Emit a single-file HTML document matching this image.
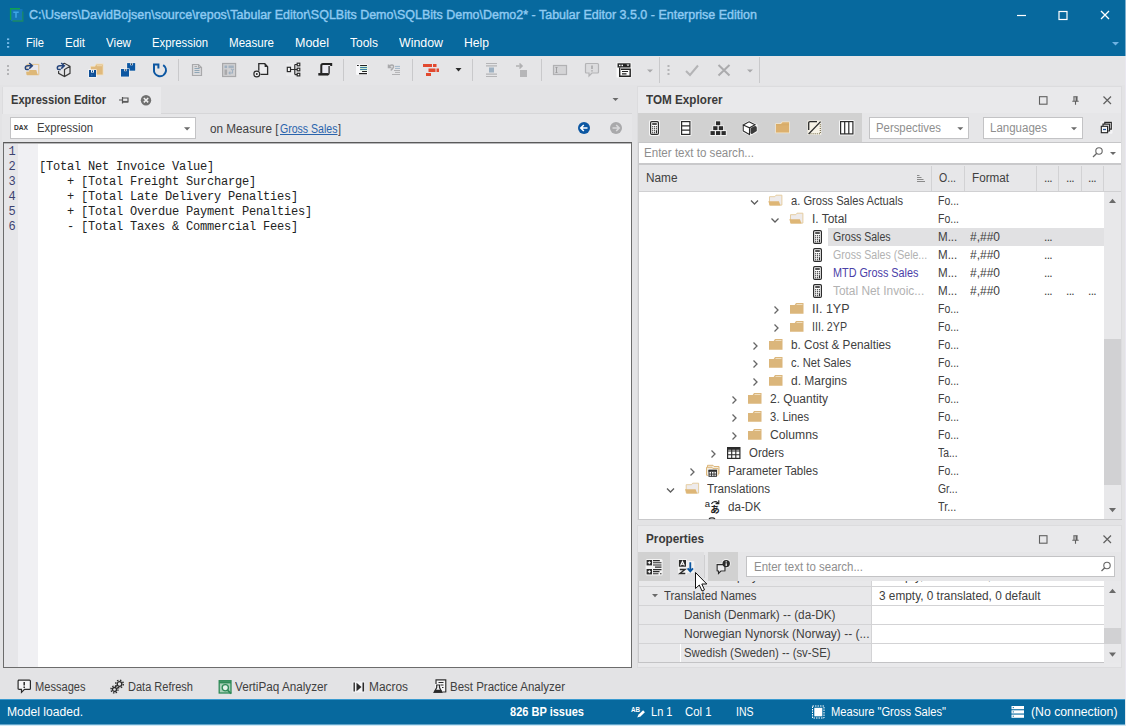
<!DOCTYPE html>
<html>
<head>
<meta charset="utf-8">
<title>Tabular Editor</title>
<style>
html,body{margin:0;padding:0;}
body{width:1126px;height:726px;overflow:hidden;position:relative;background:#e3e3e5;font-family:"Liberation Sans",sans-serif;font-size:12px;color:#3b3b3b;}
.abs{position:absolute;}
.t{position:absolute;white-space:nowrap;line-height:16px;height:16px;transform-origin:0 50%;font-size:12.5px;}
svg{position:absolute;overflow:visible;}
#titlebar{left:0;top:0;width:1126px;height:56px;background:#07699e;}
.ttl{font-size:12.5px;color:#8fcaf2;-webkit-text-stroke:0.4px #8fcaf2;}
.menu{color:#fff;}
#toolbar{left:0;top:56px;width:1126px;height:29px;background:#e5e5e7;}
.ptitle{font-weight:bold;font-size:12.5px;color:#3a3a3a;}
.n{color:#404040;}
.g{color:#8e8e8e;}
.dg{color:#b2b2b2;}
.pu{color:#4a40a8;}
.dax{font-size:8px;font-weight:bold;color:#333;}
.lnk{color:#2a64ad;text-decoration:underline;}
.st{color:#fff;}
.b{font-weight:bold;}
#editor{left:3px;top:142px;width:627px;height:524px;background:#fff;border:1px solid #6c6c6c;border-top:1px solid #5a5a5a;box-shadow:inset 0 1px 0 #b8b8ba;}
#gutter{left:4px;top:144px;width:34px;height:523px;background:linear-gradient(90deg,#e6e6e9 0,#e6e6e9 14px,#f0f0f3 14px);}
.fx{transform:none;}
.ln{left:8.500px;font-family:"Liberation Mono",monospace;font-size:12px;color:#3d4270;}
.code{font-family:"Liberation Mono",monospace;font-size:12px;letter-spacing:-0.2px;color:#222;white-space:pre;}
#status{left:0;top:699px;width:1126px;height:25px;background:#07699e;}

</style>
</head>
<body>
<div id="titlebar" class="abs"></div>
<svg style="left:0;top:0" width="1126" height="56" viewBox="0 0 1126 56">
 <rect x="11" y="9" width="11.5" height="12" fill="#1477b6"/>
 <path d="M12.5 21 H22.8 V11.5" fill="none" stroke="#1b8a66" stroke-width="1.3"/>
 <path d="M10.6 20 V8.7 H20" fill="none" stroke="#10a04e" stroke-width="1.4"/>
 <path d="M13.3 12.3 H18.7 M16 12.3 V17.7" stroke="#3fa6e6" stroke-width="1.5" fill="none"/>
 <rect x="7" y="38.4" width="2.2" height="1.7" fill="#7abdea"/><rect x="7" y="42.2" width="2.2" height="1.7" fill="#7abdea"/><rect x="7" y="46" width="2.2" height="1.7" fill="#7abdea"/>
 <path d="M1017 15.5 H1026" stroke="#fff" stroke-width="1.2"/>
 <rect x="1059" y="11.5" width="8" height="8" fill="none" stroke="#fff" stroke-width="1.2"/>
 <path d="M1101 11 L1109 19 M1109 11 L1101 19" stroke="#fff" stroke-width="1.3"/>
 <path d="M1112 42 H1119 L1115.5 45.5 Z" fill="#6fb2e2"/>
 <rect x="1125" y="0" width="1" height="56" fill="#7fb0d0"/>
</svg>

<div id="toolbar" class="abs"></div>
<svg style="left:0;top:56px" width="1126" height="29" viewBox="0 56 1126 29">
 <g fill="#b4b4b6"><rect x="7" y="65" width="2" height="2"/><rect x="7" y="69" width="2" height="2"/><rect x="7" y="73" width="2" height="2"/>
 <rect x="667.5" y="65" width="2" height="2"/><rect x="667.5" y="69" width="2" height="2"/><rect x="667.5" y="73" width="2" height="2"/></g>
 <g fill="#c9c9cb"><rect x="178" y="59" width="1" height="22"/><rect x="343" y="59" width="1" height="22"/><rect x="412" y="59" width="1" height="22"/><rect x="472" y="59" width="1" height="22"/><rect x="541" y="59" width="1" height="22"/><rect x="659" y="57" width="1" height="26"/><rect x="759" y="57" width="1" height="26"/></g>
 <!-- 1 open folder -->
 <g>
  <path d="M27 64.4 H38.8 V74.8 H27 Z" fill="#e9e8ee" stroke="#e7c48c" stroke-width="1"/>
  <path d="M26.2 71.8 L29.5 70 H36.3 L37.8 74.9 H26.8 Z" fill="#deb878"/>
  <path d="M25.3 70.3 H29.2" stroke="#e5e5e7" stroke-width="2.6"/>
  <path d="M28.8 69.6 H26.7 Q25.3 69.6 25.3 68 Q25.3 65.8 28 65.8 H31.6 M29.2 63 L32.3 65.8 L29.2 68.6" fill="none" stroke="#24437a" stroke-width="1.5"/>
 </g>
 <!-- 2 cube -->
 <g fill="none" stroke="#3a3a3a" stroke-width="1.2">
  <path d="M63 63.8 L64.5 63.3 L70 66.3 V73.3 L64.5 76.5 L58.6 73.3 V71 M64.5 76.5 V69.5 L70 66.3"/>
  <path d="M60.8 69.6 H58.7 Q57.3 69.6 57.3 68 Q57.3 65.8 60 65.8 H63.6 M61.2 63 L64.3 65.8 L61.2 68.6" stroke="#24437a" stroke-width="1.5"/>
 </g>
 <!-- 3 folder + disk -->
 <g>
  <path d="M90.3 66 H94.5 L96 63.6 H103.5 V75.2 H90.3 Z" fill="#f1e0bf"/>
  <path d="M91 66.7 H95 L96.5 64.4 H102.7 V74.5 H91 Z" fill="#e0b97c"/>
  <path d="M96.8 65.7 H102" stroke="#f1e0bf" stroke-width="0.8"/>
  <rect x="88.3" y="69.4" width="8.3" height="8.2" fill="#f8f8fa"/>
  <rect x="89" y="70" width="7" height="7" fill="#0f4f96"/><rect x="91" y="70" width="3" height="2.6" fill="#eef3f8"/><rect x="92" y="70.5" width="1" height="1.6" fill="#0f4f96"/>
  <rect x="91.3" y="74.3" width="1" height="1.5" fill="#3a77b8"/>
 </g>
 <!-- 4 two disks -->
 <g>
  <rect x="126.5" y="62.6" width="9.2" height="8.6" fill="#f4f4f6"/>
  <rect x="127.1" y="63.1" width="8.1" height="7.6" fill="#0c57a2"/><rect x="130.3" y="63.1" width="2.4" height="2.2" fill="#f4f4f6"/><rect x="131" y="63.4" width="1" height="1.5" fill="#1d2f45"/>
  <rect x="120.4" y="68.4" width="9.2" height="8.8" fill="#f4f4f6"/>
  <rect x="121" y="69" width="8" height="7.6" fill="#0c57a2"/><rect x="124.2" y="69" width="2.4" height="2.2" fill="#f4f4f6"/><rect x="124.9" y="69.3" width="1" height="1.5" fill="#1d2f45"/>
 </g>
 <!-- 5 refresh -->
 <g fill="none" stroke="#0c57a2" stroke-width="2">
  <path d="M163.2 65.2 A6 6 0 1 1 154 69.5 L154 64.4 H158.4 V68.5" stroke-linejoin="miter"/>
 </g>
 <!-- 6 doc grey -->
 <g fill="none">
  <path d="M192.5 64.5 H198.5 L201.5 67.5 V75.5 H192.5 Z" fill="#dadadc" stroke="#a9a9ab" stroke-width="1.2"/>
  <path d="M198.5 64.5 V67.5 H201.5" stroke="#a9a9ab" stroke-width="1"/>
  <path d="M194.5 68.5 H199.5 M194.5 70.5 H199.5 M194.5 72.5 H199.5" stroke="#8fa6b6" stroke-width="1"/>
  <path d="M194.5 66.5 H197" stroke="#a9a9ab" stroke-width="1"/>
 </g>
 <!-- 7 grid grey -->
 <g>
  <rect x="222.6" y="63.5" width="13" height="13" fill="#d0d0d2" stroke="#a8a8aa" stroke-width="1.2"/>
  <rect x="224.5" y="65.5" width="2.6" height="2.6" fill="#9fb0c0"/><rect x="228.5" y="65.5" width="5.3" height="2.6" fill="#a4b2c0"/>
  <rect x="224.5" y="69.5" width="2.6" height="5.3" fill="#a9a9ab"/><path d="M229 73 H232.5 V70 M231 68.8 L232.5 70.3 L234 68.8 M230.3 71.5 L229 73 L230.3 74.5" fill="none" stroke="#9fb0c0" stroke-width="1.1"/>
 </g>
 <!-- 8 doc with circle -->
 <g fill="none" stroke="#2b2b2b" stroke-width="1.3">
  <path d="M258.8 70.8 V63.7 H264.8 L267.6 66.8 V74.4 H260.5" fill="#ececee"/>
  <path d="M264.6 63.7 L267.7 67 H264.6 Z" fill="#2b2b2b" stroke="none"/>
  <circle cx="256.8" cy="74" r="2.9" fill="#f2f2f4" stroke-width="1.2"/><circle cx="256.8" cy="74" r="1" fill="#2b2b2b" stroke="none"/>
 </g>
 <!-- 9 tree -->
 <g fill="none" stroke="#2b2b2b" stroke-width="1.2">
  <rect x="286.2" y="63" width="15" height="13.2" fill="#ebebed" stroke="none"/>
  <rect x="287.3" y="67.3" width="3.2" height="4.3" fill="#fafafa"/>
  <path d="M290.5 69.5 H294.8 M294.8 64.5 V74.6 M294.8 64.5 H297 M294.8 69.5 H297 M294.8 74.6 H297"/>
  <rect x="297.2" y="63.2" width="2.6" height="2.6" fill="#fafafa"/><rect x="297.2" y="68.2" width="2.6" height="2.6" fill="#fafafa"/><rect x="297.2" y="73.3" width="2.6" height="2.6" fill="#fafafa"/>
 </g>
 <!-- 10 scroll -->
 <g fill="none" stroke="#222">
  <path d="M322 64.5 H329.5 V74 H322 Z" fill="#e9e9f1" stroke="none"/>
  <path d="M321.3 73.6 V65.5 Q321.3 63.9 323 63.9 H331.2 V66" stroke-width="2"/>
  <path d="M329.1 66 V73 Q329.1 74.6 327.5 74.6" stroke-width="1.3"/>
  <path d="M318.3 74.3 H328.3" stroke-width="2.5"/>
 </g>
 <g fill="#c9c9cb"><rect x="343" y="59" width="1" height="22"/></g>
 <!-- 11 indent -->
 <g>
  <rect x="356" y="64" width="12" height="11" rx="1.5" fill="#f8f8fa"/>
  <rect x="360" y="66.3" width="7.5" height="4.2" fill="#cfeccd"/>
  <path d="M357 65.5 H358.8 M360.1 65.5 H367" stroke="#222" stroke-width="1.1"/>
  <path d="M360.1 67.5 H367 M360.1 69.5 H367" stroke="#3a7ea6" stroke-width="1.1"/>
  <path d="M362.1 71.5 H367 M359 73.6 H367" stroke="#222" stroke-width="1.1"/>
 </g>
 <!-- 12 undo indent grey -->
 <g fill="none">
  <path d="M395 66.4 H400 M395 68.4 H400" stroke="#9fb5c8" stroke-width="1"/>
  <path d="M394 70.5 H400 M395 72.4 H400 M392 74.5 H400" stroke="#b1b1b3" stroke-width="1"/>
  <path d="M388.5 64.5 V67.5 H391.5 M389 67 C390.5 64 394 64.5 393.5 67 C393.3 68.5 391.5 69 391 70.5" stroke="#a9a9ab" stroke-width="1.5"/>
 </g>
 <!-- 13 gantt red -->
 <g transform="translate(423,62)" fill="#e2492f">
  <rect x="0" y="2" width="9" height="3"/><rect x="10" y="2" width="3.5" height="3"/>
  <rect x="5.5" y="6.5" width="7" height="3.5"/><rect x="13.5" y="6.5" width="2.5" height="3.5"/>
  <rect x="3" y="11" width="5" height="3"/>
 </g>
 <path d="M455.5 68 H461.5 L458.5 71.5 Z" fill="#2b2b2b"/>
 <!-- 14 align grey -->
 <g transform="translate(483,62)" fill="none" stroke="#b4b4b6" stroke-width="1.2">
  <path d="M3 1.5 H14 M3 3.8 H14 M3 12.2 H14 M3 14.5 H14"/>
  <rect x="6" y="5.5" width="5" height="5" fill="#9eb1c2" stroke="none"/>
 </g>
 <!-- 15 arrow+box grey -->
 <g transform="translate(515,62)" fill="none" stroke="#b1b1b3" stroke-width="1.6">
  <path d="M1 4 H7 M4.5 1.5 L7 4 L4.5 6.5"/>
  <rect x="5" y="8" width="7" height="7" fill="#b6b6b8" stroke="none"/>
 </g>
 <!-- 16 rect cursor grey -->
 <g transform="translate(552,62)" fill="none" stroke="#b1b1b3" stroke-width="1.2">
  <rect x="1.5" y="3.5" width="13" height="9" fill="#d4d4d6"/>
  <path d="M3.5 5.5 H5.5 M4.5 5.5 V10.5 M3.5 10.5 H5.5" stroke-width="0.9" stroke="#9a9a9c"/>
 </g>
 <!-- 17 bubble grey -->
 <g transform="translate(584,62)" fill="none" stroke="#b4b4b6" stroke-width="1.2">
  <path d="M2.5 1.5 H13.5 Q14.5 1.5 14.5 2.5 V10 Q14.5 11 13.5 11 H8 L5 14 V11 H2.5 Q1.5 11 1.5 10 V2.5 Q1.5 1.5 2.5 1.5 Z" fill="#dcdcde"/>
  <path d="M8 3.5 V7 M8 8.2 V9.5" stroke="#a4a4a6" stroke-width="1.5"/>
 </g>
 <!-- 18 form black -->
 <g transform="translate(616,62)">
  <rect x="0.5" y="0.5" width="15" height="15" fill="#fafafa"/>
  <rect x="1.5" y="1.3" width="13" height="4.2" fill="#222"/>
  <rect x="3" y="2.7" width="1.5" height="1.5" fill="#fff"/><rect x="5.5" y="2.7" width="1.5" height="1.5" fill="#fff"/><path d="M10.5 2.5 H13.5 L12 4.3Z" fill="#fff"/>
  <path d="M3.7 5.5 V14.3 H14.2 V7.2 H5" fill="none" stroke="#222" stroke-width="1.4"/>
  <path d="M6 9.5 H12 M6 11.8 H10.5" stroke="#222" stroke-width="1.2"/>
 </g>
 <path d="M647 69.5 H653 L650 72.5 Z" fill="#a9a9ab"/>
 <path d="M686 71 L690 75 L698 65.5" fill="none" stroke="#b4b4b6" stroke-width="2"/>
 <path d="M718.5 65 L729.5 75.5 M729.5 65 L718.5 75.5" fill="none" stroke="#ababad" stroke-width="2"/>
 <path d="M747 69.5 H753 L750 72.5 Z" fill="#a9a9ab"/>
</svg>

<div class="abs" style="left:0;top:85px;width:1126px;height:28px;background:#e3e3e5"></div>
<div class="abs" style="left:2px;top:113px;width:630px;height:30px;background:#e6e6e8;border-top:1px solid #d6d6d8"></div>
<div class="abs" style="left:2px;top:87px;width:159px;height:27px;background:#eaeaec;border-left:1px solid #dcdcde;box-sizing:border-box"></div>
<div class="abs" style="left:10px;top:117px;width:186px;height:22px;background:#fff;border:1px solid #c3c3c5;box-sizing:border-box"></div>
<svg style="left:0;top:85px" width="640" height="60" viewBox="0 85 640 60">
 <!-- pin -->
 <path d="M119 100 H122.5 M122.5 97 V103.5 M123 98 H128 V102 H123" fill="none" stroke="#555" stroke-width="1.2"/>
 <path d="M123 101.7 H128" stroke="#5a5a5a" stroke-width="1.6"/>
 <!-- close -->
 <circle cx="146" cy="100.2" r="5.2" fill="#707070"/>
 <path d="M143.8 98 L148.2 102.4 M148.2 98 L143.8 102.4" stroke="#f0f0f0" stroke-width="1.5"/>
 <!-- combo arrow -->
 <path d="M184 127.3 H190.2 L187.1 130.4 Z" fill="#6a6a6a"/>
 <!-- tabs dropdown -->
 <path d="M612.5 98 H618.5 L615.5 101 Z" fill="#6a6a6a"/>
 <!-- nav arrows -->
 <circle cx="584" cy="128" r="6" fill="#0c57a2"/>
 <path d="M587.5 128 H581 M583.8 125 L580.8 128 L583.8 131" fill="none" stroke="#fff" stroke-width="1.6"/>
 <circle cx="616" cy="128" r="6" fill="#a9a9ab"/>
 <path d="M612.5 128 H619 M616.2 125 L619.2 128 L616.2 131" fill="none" stroke="#d9d9db" stroke-width="1.6"/>
</svg>
<div id="editor" class="abs"></div>
<div id="gutter" class="abs"></div>
<div class="t fx ln" style="top:144px">1</div>
<div class="t fx ln" style="top:159px">2</div>
<div class="t fx ln" style="top:174px">3</div>
<div class="t fx ln" style="top:189px">4</div>
<div class="t fx ln" style="top:204px">5</div>
<div class="t fx ln" style="top:219px">6</div>
<div class="t fx code" style="left:39px;top:159px">[Total Net Invoice Value]</div>
<div class="t fx code" style="left:39px;top:174px">    + [Total Freight Surcharge]</div>
<div class="t fx code" style="left:39px;top:189px">    + [Total Late Delivery Penalties]</div>
<div class="t fx code" style="left:39px;top:204px">    + [Total Overdue Payment Penalties]</div>
<div class="t fx code" style="left:39px;top:219px">    - [Total Taxes &amp; Commercial Fees]</div>

<div class="abs" style="left:637px;top:86px;width:485px;height:434px;background:#e9e9eb;border:1px solid #dcdcde;box-sizing:border-box"></div>
<div class="abs" style="left:638px;top:113px;width:483px;height:29px;background:#e6e6e8"></div>
<div class="abs" style="left:638px;top:113px;width:224px;height:29px;background:#d1d1d1"></div>
<div class="abs" style="left:869px;top:117px;width:100px;height:22px;background:#fff;border:1px solid #c3c3c5;box-sizing:border-box"></div>
<div class="abs" style="left:983px;top:117px;width:100px;height:22px;background:#fff;border:1px solid #c3c3c5;box-sizing:border-box"></div>
<div class="abs" style="left:639px;top:143px;width:482px;height:20px;background:#fff;border-bottom:2px solid #c9c9cb"></div>
<div class="abs" style="left:638px;top:142px;width:483px;height:1px;background:#c6c6c8"></div>
<div class="abs" style="left:639px;top:165px;width:482px;height:26px;background:#e7e7e9;border-bottom:1px solid #d0d0d2"></div>
<div class="abs" style="left:931px;top:166px;width:1px;height:25px;background:#d2d2d4"></div>
<div class="abs" style="left:964px;top:166px;width:1px;height:25px;background:#d2d2d4"></div>
<div class="abs" style="left:1036px;top:166px;width:1px;height:25px;background:#d2d2d4"></div>
<div class="abs" style="left:1058px;top:166px;width:1px;height:25px;background:#d2d2d4"></div>
<div class="abs" style="left:1081px;top:166px;width:1px;height:25px;background:#d2d2d4"></div>
<div class="abs" style="left:1103px;top:166px;width:1px;height:25px;background:#d2d2d4"></div>
<div class="abs" style="left:639px;top:192px;width:465px;height:327px;background:#fff"></div>
<div class="abs" style="left:638px;top:143px;width:1px;height:376px;background:#c9c9cb"></div>
<div class="abs" style="left:638px;top:519px;width:484px;height:1px;background:#c9c9cb"></div>
<div class="abs" style="left:828px;top:228px;width:276px;height:18px;background:#e1e1e3"></div>
<div class="abs" style="left:1104px;top:192px;width:17px;height:327px;background:#e8e8ea"></div>
<div class="abs" style="left:1104px;top:339px;width:17px;height:146px;background:#d1d1d3"></div>
<svg style="left:0;top:0" width="1126" height="726" viewBox="0 0 1126 726">
<g transform="translate(650,121)"><rect x="-1" y="-1" width="11" height="16" rx="2" fill="#f6f6f6"/><rect x="0.6" y="0.6" width="7.8" height="12.8" rx="1.2" fill="#fff" stroke="#2b2b2b" stroke-width="1.2"/><rect x="2.2" y="2.2" width="4.6" height="1.6" fill="#2b2b2b"/><rect x="2.1" y="5.2" width="1.1" height="1.1" fill="#2b2b2b"/><rect x="4" y="5.2" width="1.1" height="1.1" fill="#2b2b2b"/><rect x="5.9" y="5.2" width="1.1" height="1.1" fill="#2b2b2b"/><rect x="2.1" y="7.2" width="1.1" height="1.1" fill="#2b2b2b"/><rect x="4" y="7.2" width="1.1" height="1.1" fill="#2b2b2b"/><rect x="5.9" y="7.2" width="1.1" height="1.1" fill="#2b2b2b"/><rect x="2.1" y="9.2" width="1.1" height="1.1" fill="#2b2b2b"/><rect x="4" y="9.2" width="1.1" height="1.1" fill="#2b2b2b"/><rect x="5.9" y="9.2" width="1.1" height="3.1" fill="#2b2b2b"/><rect x="2.1" y="11.2" width="1.1" height="1.1" fill="#2b2b2b"/><rect x="4" y="11.2" width="1.1" height="1.1" fill="#2b2b2b"/></g>
<g transform="translate(681,121)"><rect x="-1" y="-1" width="11.5" height="16" rx="1.5" fill="#f6f6f6"/><rect x="0.6" y="0.6" width="8.3" height="12.8" fill="#fff" stroke="#2b2b2b" stroke-width="1.2"/><path d="M0.6 4.8 H9 M0.6 9.2 H9" stroke="#2b2b2b" stroke-width="1.2"/></g>
<g transform="translate(710.5,121)" fill="#2b2b2b"><rect x="4.8" y="-0.4" width="5.8" height="5.4" fill="#f8f8f8"/><rect x="2" y="4.5" width="5.8" height="5.4" fill="#f8f8f8"/><rect x="7.6" y="4.5" width="5.8" height="5.4" fill="#f8f8f8"/><rect x="-0.7" y="9.4" width="5.8" height="5.4" fill="#f8f8f8"/><rect x="4.8" y="9.4" width="5.8" height="5.4" fill="#f8f8f8"/><rect x="10.3" y="9.4" width="5.8" height="5.4" fill="#f8f8f8"/><rect x="5.5" y="0.3" width="4.3" height="3.9"/><rect x="2.7" y="5.2" width="4.3" height="3.9"/><rect x="8.3" y="5.2" width="4.3" height="3.9"/><rect x="0" y="10.1" width="4.3" height="3.9"/><rect x="5.5" y="10.1" width="4.3" height="3.9"/><rect x="11" y="10.1" width="4.3" height="3.9"/></g>
<g transform="translate(742,121)"><path d="M7 -0.5 L15.5 3.5 V11 L8 15 L0 11 V3.5 Z" fill="#f4f4f4"/><path d="M7 0.8 L13 3.8 L7.5 6.8 L1.2 4 Z M1.2 4 V10 L7.5 13.5 V6.8" fill="#fff" stroke="#2b2b2b" stroke-width="1.1"/><path d="M8.5 7.3 L12 5.3 Q14.5 4.3 14.8 6.5 V10 L10.5 12.8 Q8.5 13.5 8.5 11.5 Z" fill="#3a3a3a"/></g>
<g transform="translate(775,121)"><path d="M0.3 2.3 H5.5 L7 0.5 H14.8 V12.3 H0.3 Z" fill="#f3e6cc"/><path d="M1 3 H6 L7.5 1.3 H14 V11.5 H1 Z" fill="#dcb06e"/><path d="M1 3.8 H14" stroke="#d2a660" stroke-width="0.6"/></g>
<g transform="translate(808,121)"><rect x="-0.5" y="-0.5" width="13.8" height="14.3" fill="#f6f2e6"/><path d="M0.7 9 V2 Q0.7 0.7 2 0.7 H9" fill="none" stroke="#2b2b2b" stroke-width="1.3"/><path d="M0.6 13 L12.6 0.6" stroke="#2b2b2b" stroke-width="1.3"/><path d="M2.5 12.8 H12.3 V3" fill="none" stroke="#6b6240" stroke-width="1.1" stroke-dasharray="1 1.1"/></g>
<g transform="translate(840,121)"><rect x="-1" y="-1" width="15.5" height="15.5" rx="1.5" fill="#f6f6f6"/><rect x="0.6" y="0.6" width="12.3" height="12.3" fill="#fff" stroke="#2b2b2b" stroke-width="1.2"/><path d="M4.7 0.6 V13 M8.8 0.6 V13" stroke="#2b2b2b" stroke-width="1.2"/></g>
<rect x="1039.5" y="96.7" width="7.5" height="7.5" fill="none" stroke="#606060" stroke-width="1.1"/><path d="M1073.3 96.7 H1077.7 M1074 96.7 V101.2 M1077 96.7 V101.2 M1072.3 101.2 H1078.7 M1075.5 101.2 V104.7" fill="none" stroke="#606060" stroke-width="1.1"/><path d="M1075.6 96.7 H1077 V101.2 H1075.6 Z" fill="#606060"/><path d="M1103.5 96.5 L1111 104.0 M1111 96.5 L1103.5 104.0" stroke="#606060" stroke-width="1.2"/>
<path d="M957.3 127.3 H963.3 L960.3 130.3 Z" fill="#6a6a6a"/><path d="M1071 127.3 H1077 L1074 130.3 Z" fill="#6a6a6a"/>
<g fill="#fafafa" stroke="#2b2b2b" stroke-width="1.2"><rect x="1100.3" y="121" width="12.2" height="12.8" rx="1" fill="#f4f4f6" stroke="none"/><path d="M1104.8 124 V122.3 H1111.3 V129.2 H1110"/><path d="M1103 126.2 V124.2 H1109.5 V131 H1108"/><rect x="1101.3" y="126.3" width="6.3" height="6.4"/><path d="M1103 129.5 H1106" stroke="#1c4f96" stroke-width="1.3"/></g>
<circle cx="1099" cy="151" r="3.2" fill="none" stroke="#666" stroke-width="1.1"/><path d="M1096.8 153.3 L1093 157" stroke="#666" stroke-width="1.3"/><path d="M1110 152 H1116 L1113 155 Z" fill="#6a6a6a"/>
<path d="M917 175.5 H919.5 M917 177.5 H921.5 M917 179.5 H923.5 M917 181.5 H925" stroke="#8a8a8a" stroke-width="1"/>
<path d="M1109 203 H1116 L1112.5 198.7 Z" fill="#6a6a6a"/><path d="M1109 508 H1116 L1112.5 512.3 Z" fill="#6a6a6a"/>
<path d="M751.0 200.5 L754.5 204 L758.0 200.5" fill="none" stroke="#5e5e5e" stroke-width="1.3"/>
<g transform="translate(768.3,194.7)"><path d="M1.2 2 H6.5 L7.7 0.5 H13.6 V10.4 H1.2 Z" fill="#eeebeb" stroke="#e3c899" stroke-width="0.9"/><path d="M0 6.5 H10.6 L12.2 10.9 H1.6 Z" fill="#deb676"/></g>
<path d="M771.5 218.5 L775 222 L778.5 218.5" fill="none" stroke="#5e5e5e" stroke-width="1.3"/>
<g transform="translate(789.3,212.7)"><path d="M1.2 2 H6.5 L7.7 0.5 H13.6 V10.4 H1.2 Z" fill="#eeebeb" stroke="#e3c899" stroke-width="0.9"/><path d="M0 6.5 H10.6 L12.2 10.9 H1.6 Z" fill="#deb676"/></g>
<g transform="translate(813,230)"><rect x="0.6" y="0.6" width="7.8" height="12.8" rx="1.2" fill="#fff" stroke="#2b2b2b" stroke-width="1.2"/><rect x="2.2" y="2.2" width="4.6" height="1.6" fill="#2b2b2b"/><rect x="2.1" y="5.2" width="1.1" height="1.1" fill="#2b2b2b"/><rect x="4" y="5.2" width="1.1" height="1.1" fill="#2b2b2b"/><rect x="5.9" y="5.2" width="1.1" height="1.1" fill="#2b2b2b"/><rect x="2.1" y="7.2" width="1.1" height="1.1" fill="#2b2b2b"/><rect x="4" y="7.2" width="1.1" height="1.1" fill="#2b2b2b"/><rect x="5.9" y="7.2" width="1.1" height="1.1" fill="#2b2b2b"/><rect x="2.1" y="9.2" width="1.1" height="1.1" fill="#2b2b2b"/><rect x="4" y="9.2" width="1.1" height="1.1" fill="#2b2b2b"/><rect x="5.9" y="9.2" width="1.1" height="3.1" fill="#2b2b2b"/><rect x="2.1" y="11.2" width="1.1" height="1.1" fill="#2b2b2b"/><rect x="4" y="11.2" width="1.1" height="1.1" fill="#2b2b2b"/></g>
<g transform="translate(813,248)"><rect x="0.6" y="0.6" width="7.8" height="12.8" rx="1.2" fill="#fff" stroke="#2b2b2b" stroke-width="1.2"/><rect x="2.2" y="2.2" width="4.6" height="1.6" fill="#2b2b2b"/><rect x="2.1" y="5.2" width="1.1" height="1.1" fill="#2b2b2b"/><rect x="4" y="5.2" width="1.1" height="1.1" fill="#2b2b2b"/><rect x="5.9" y="5.2" width="1.1" height="1.1" fill="#2b2b2b"/><rect x="2.1" y="7.2" width="1.1" height="1.1" fill="#2b2b2b"/><rect x="4" y="7.2" width="1.1" height="1.1" fill="#2b2b2b"/><rect x="5.9" y="7.2" width="1.1" height="1.1" fill="#2b2b2b"/><rect x="2.1" y="9.2" width="1.1" height="1.1" fill="#2b2b2b"/><rect x="4" y="9.2" width="1.1" height="1.1" fill="#2b2b2b"/><rect x="5.9" y="9.2" width="1.1" height="3.1" fill="#2b2b2b"/><rect x="2.1" y="11.2" width="1.1" height="1.1" fill="#2b2b2b"/><rect x="4" y="11.2" width="1.1" height="1.1" fill="#2b2b2b"/></g>
<g transform="translate(813,266)"><rect x="0.6" y="0.6" width="7.8" height="12.8" rx="1.2" fill="#fff" stroke="#2b2b2b" stroke-width="1.2"/><rect x="2.2" y="2.2" width="4.6" height="1.6" fill="#2b2b2b"/><rect x="2.1" y="5.2" width="1.1" height="1.1" fill="#2b2b2b"/><rect x="4" y="5.2" width="1.1" height="1.1" fill="#2b2b2b"/><rect x="5.9" y="5.2" width="1.1" height="1.1" fill="#2b2b2b"/><rect x="2.1" y="7.2" width="1.1" height="1.1" fill="#2b2b2b"/><rect x="4" y="7.2" width="1.1" height="1.1" fill="#2b2b2b"/><rect x="5.9" y="7.2" width="1.1" height="1.1" fill="#2b2b2b"/><rect x="2.1" y="9.2" width="1.1" height="1.1" fill="#2b2b2b"/><rect x="4" y="9.2" width="1.1" height="1.1" fill="#2b2b2b"/><rect x="5.9" y="9.2" width="1.1" height="3.1" fill="#2b2b2b"/><rect x="2.1" y="11.2" width="1.1" height="1.1" fill="#2b2b2b"/><rect x="4" y="11.2" width="1.1" height="1.1" fill="#2b2b2b"/></g>
<g transform="translate(813,284)"><rect x="0.6" y="0.6" width="7.8" height="12.8" rx="1.2" fill="#fff" stroke="#2b2b2b" stroke-width="1.2"/><rect x="2.2" y="2.2" width="4.6" height="1.6" fill="#2b2b2b"/><rect x="2.1" y="5.2" width="1.1" height="1.1" fill="#2b2b2b"/><rect x="4" y="5.2" width="1.1" height="1.1" fill="#2b2b2b"/><rect x="5.9" y="5.2" width="1.1" height="1.1" fill="#2b2b2b"/><rect x="2.1" y="7.2" width="1.1" height="1.1" fill="#2b2b2b"/><rect x="4" y="7.2" width="1.1" height="1.1" fill="#2b2b2b"/><rect x="5.9" y="7.2" width="1.1" height="1.1" fill="#2b2b2b"/><rect x="2.1" y="9.2" width="1.1" height="1.1" fill="#2b2b2b"/><rect x="4" y="9.2" width="1.1" height="1.1" fill="#2b2b2b"/><rect x="5.9" y="9.2" width="1.1" height="3.1" fill="#2b2b2b"/><rect x="2.1" y="11.2" width="1.1" height="1.1" fill="#2b2b2b"/><rect x="4" y="11.2" width="1.1" height="1.1" fill="#2b2b2b"/></g>
<path d="M774.5 306.5 L778.0 310 L774.5 313.5" fill="none" stroke="#666" stroke-width="1.3"/>
<g transform="translate(790,303)"><path d="M0 1.9 H4.7 L6 0 H13.5 V10.8 H0 Z" fill="#dbb67b"/><path d="M6.5 1.5 H12.5" stroke="#f1e2c6" stroke-width="0.9"/></g>
<path d="M774.5 324.5 L778.0 328 L774.5 331.5" fill="none" stroke="#666" stroke-width="1.3"/>
<g transform="translate(790,321)"><path d="M0 1.9 H4.7 L6 0 H13.5 V10.8 H0 Z" fill="#dbb67b"/><path d="M6.5 1.5 H12.5" stroke="#f1e2c6" stroke-width="0.9"/></g>
<path d="M753.5 342.5 L757.0 346 L753.5 349.5" fill="none" stroke="#666" stroke-width="1.3"/>
<g transform="translate(769,339)"><path d="M0 1.9 H4.7 L6 0 H13.5 V10.8 H0 Z" fill="#dbb67b"/><path d="M6.5 1.5 H12.5" stroke="#f1e2c6" stroke-width="0.9"/></g>
<path d="M753.5 360.5 L757.0 364 L753.5 367.5" fill="none" stroke="#666" stroke-width="1.3"/>
<g transform="translate(769,357)"><path d="M0 1.9 H4.7 L6 0 H13.5 V10.8 H0 Z" fill="#dbb67b"/><path d="M6.5 1.5 H12.5" stroke="#f1e2c6" stroke-width="0.9"/></g>
<path d="M753.5 378.5 L757.0 382 L753.5 385.5" fill="none" stroke="#666" stroke-width="1.3"/>
<g transform="translate(769,375)"><path d="M0 1.9 H4.7 L6 0 H13.5 V10.8 H0 Z" fill="#dbb67b"/><path d="M6.5 1.5 H12.5" stroke="#f1e2c6" stroke-width="0.9"/></g>
<path d="M732.5 396.5 L736.0 400 L732.5 403.5" fill="none" stroke="#666" stroke-width="1.3"/>
<g transform="translate(748,393)"><path d="M0 1.9 H4.7 L6 0 H13.5 V10.8 H0 Z" fill="#dbb67b"/><path d="M6.5 1.5 H12.5" stroke="#f1e2c6" stroke-width="0.9"/></g>
<path d="M732.5 414.5 L736.0 418 L732.5 421.5" fill="none" stroke="#666" stroke-width="1.3"/>
<g transform="translate(748,411)"><path d="M0 1.9 H4.7 L6 0 H13.5 V10.8 H0 Z" fill="#dbb67b"/><path d="M6.5 1.5 H12.5" stroke="#f1e2c6" stroke-width="0.9"/></g>
<path d="M732.5 432.5 L736.0 436 L732.5 439.5" fill="none" stroke="#666" stroke-width="1.3"/>
<g transform="translate(748,429)"><path d="M0 1.9 H4.7 L6 0 H13.5 V10.8 H0 Z" fill="#dbb67b"/><path d="M6.5 1.5 H12.5" stroke="#f1e2c6" stroke-width="0.9"/></g>
<path d="M711.5 450.5 L715.0 454 L711.5 457.5" fill="none" stroke="#666" stroke-width="1.3"/>
<g transform="translate(727,447)"><rect x="0.6" y="0.6" width="12.3" height="10.8" fill="#fff" stroke="#2b2b2b" stroke-width="1.2"/><path d="M0.6 4 H13 M0.6 7.7 H13 M4.7 0.6 V11.4 M8.8 0.6 V11.4" stroke="#2b2b2b" stroke-width="1.1"/><rect x="0.6" y="0.6" width="12.3" height="2.2" fill="#2b2b2b"/></g>
<path d="M690.5 468.5 L694.0 472 L690.5 475.5" fill="none" stroke="#666" stroke-width="1.3"/>
<g transform="translate(706,463.8)"><path d="M1.5 1.5 H7 L8 2.7 H13 V10 H1.5 Z" fill="#f4ecdc" stroke="#dcb67a" stroke-width="1"/><path d="M0.5 3.5 H6 L7 4.8 H12 V11.5 H0.5 Z" fill="#f4ecdc" stroke="#dcb67a" stroke-width="1"/><rect x="2" y="5.5" width="9.5" height="7.5" fill="#fff"/><rect x="3" y="6.5" width="7.4" height="6" fill="#fff" stroke="#2b2b2b" stroke-width="1"/><rect x="2.5" y="6" width="8.4" height="2" fill="#2b2b2b"/><path d="M3 10.3 H10.4 M5.5 8 V12.5 M8 8 V12.5" stroke="#2b2b2b" stroke-width="0.9"/></g>
<path d="M667.0 488.5 L670.5 492 L674.0 488.5" fill="none" stroke="#5e5e5e" stroke-width="1.3"/>
<g transform="translate(685,482.7)"><path d="M1.2 2 H6.5 L7.7 0.5 H13.6 V10.4 H1.2 Z" fill="#eeebeb" stroke="#e3c899" stroke-width="0.9"/><path d="M0 6.5 H10.6 L12.2 10.9 H1.6 Z" fill="#deb676"/></g>
<g><text x="704.8" y="507.3" font-family="Liberation Sans, sans-serif" font-size="9.5" fill="#222">a</text><text x="710.3" y="513.2" font-family="Noto Sans CJK JP, sans-serif" font-size="9.5" font-weight="bold" fill="#222">あ</text><path d="M711.5 504 C712.5 501.2 716 501 718 503 M718.8 500.3 V503.6 H715.6" fill="none" stroke="#222" stroke-width="1.1"/></g>
<path d="M709 519 C710 517.5 714 517.5 715 519" fill="none" stroke="#2b2b2b" stroke-width="1.1"/>
</svg>
<div class="abs" style="left:637px;top:525px;width:485px;height:143px;background:#e9e9eb;border:1px solid #dcdcde;box-sizing:border-box"></div>
<div class="abs" style="left:638px;top:552px;width:483px;height:29px;background:#e6e6e8"></div>
<div class="abs" style="left:638px;top:552px;width:32px;height:29px;background:#d1d1d1"></div>
<div class="abs" style="left:670px;top:552px;width:34px;height:29px;background:#dfdfe1"></div>
<div class="abs" style="left:704px;top:555px;width:1px;height:23px;background:#cfcfd1"></div>
<div class="abs" style="left:708px;top:552px;width:30px;height:29px;background:#d1d1d1"></div>
<div class="abs" style="left:746px;top:556px;width:369px;height:21px;background:#fff;border:1px solid #c3c3c5;box-sizing:border-box"></div>
<div class="abs" style="left:639px;top:581px;width:465px;height:82px;background:#e8e8ea"></div>
<div class="abs" style="left:871px;top:581px;width:233px;height:82px;background:#fff"></div>
<div class="abs" style="left:638px;top:581px;width:1px;height:82px;background:#c9c9cb"></div>
<div class="abs" style="left:638px;top:662px;width:483px;height:1px;background:#c3c3c5"></div>
<div class="abs" style="left:639px;top:586px;width:465px;height:1px;background:#d3d3d5"></div>
<div class="abs" style="left:639px;top:605px;width:465px;height:1px;background:#d3d3d5"></div>
<div class="abs" style="left:639px;top:624px;width:465px;height:1px;background:#d3d3d5"></div>
<div class="abs" style="left:639px;top:643px;width:465px;height:1px;background:#d3d3d5"></div>
<div class="abs" style="left:871px;top:581px;width:1px;height:82px;background:#d3d3d5"></div>
<div class="abs" style="left:680px;top:644px;width:1px;height:18px;background:#fff"></div>
<div class="abs" style="left:1104px;top:581px;width:17px;height:82px;background:#e8e8ea"></div>
<div class="abs" style="left:1104px;top:628px;width:17px;height:16px;background:#d1d1d3"></div>
<svg style="left:0;top:0" width="1126" height="726" viewBox="0 0 1126 726">
<rect x="1039.5" y="535.7" width="7.5" height="7.5" fill="none" stroke="#606060" stroke-width="1.1"/><path d="M1073.3 535.7 H1077.7 M1074 535.7 V540.2 M1077 535.7 V540.2 M1072.3 540.2 H1078.7 M1075.5 540.2 V543.7" fill="none" stroke="#606060" stroke-width="1.1"/><path d="M1075.6 535.7 H1077 V540.2 H1075.6 Z" fill="#606060"/><path d="M1103.5 535.5 L1111 543.0 M1111 535.5 L1103.5 543.0" stroke="#606060" stroke-width="1.2"/>
<g><rect x="645.6" y="559" width="17" height="16.4" rx="1.5" fill="#f4f4f4"/><rect x="646.6" y="560" width="5.4" height="5.4" fill="#2b2b2b"/><path d="M647.8 562.7 H650.8 M649.3 561.2 V564.2" stroke="#fff" stroke-width="1"/><rect x="646.6" y="569" width="5.4" height="5.4" fill="#2b2b2b"/><path d="M647.8 571.7 H650.8 M649.3 570.2 V573.2" stroke="#fff" stroke-width="1"/><path d="M653 560.6 H659.8 M653 562.8 H661.5 M653 565 H661.5 M655 567.1 H661.5 M653 569.6 H661.5 M653 571.6 H659.5 M653 573.7 H658.5 M660 573.7 H661.5" stroke="#2b2b2b" stroke-width="1.1" fill="none"/></g>
<g><rect x="678" y="559" width="9" height="16" rx="1" fill="#f2f2f2"/><rect x="686.5" y="561" width="7.8" height="12" rx="1" fill="#f2f2f2"/><rect x="678.9" y="560" width="7.1" height="6.7" fill="#2b2b2b"/><path d="M680.5 565.6 L682.450 561.3 L684.4 565.6 M681.3 564.2 H683.6" fill="none" stroke="#fff" stroke-width="1.1"/><path d="M679.8 569.5 H685 L679.9 573.5 H685.3" fill="none" stroke="#2b2b2b" stroke-width="1.4"/><path d="M690.3 562.3 V570.5 M687.6 568.3 L690.3 571.3 L693 568.3" fill="none" stroke="#0c57a2" stroke-width="1.8"/></g>
<g transform="translate(715.5,560)"><path d="M0.5 3.5 H10.5 V12 H6.3 L2.2 15.5 V12 H0.5 Z" fill="#f2f2f2"/><circle cx="10.7" cy="3.6" r="4.6" fill="#f2f2f2"/><path d="M1.6 4.6 H9.5 V11 H5.5 L3 13.5 V11 H1.6 Z" fill="#ececee" stroke="#2b2b2b" stroke-width="1.2"/><circle cx="10.7" cy="3.6" r="3.7" fill="#2b2b2b"/><path d="M10.7 1.3 V2.4 M10.7 3.3 V5.9" stroke="#fff" stroke-width="1.2"/></g>
<circle cx="1107" cy="565.5" r="3.2" fill="none" stroke="#666" stroke-width="1.1"/><path d="M1104.8 567.8 L1101.5 571" stroke="#666" stroke-width="1.3"/>
<path d="M652 594 H658 L655 597.3 Z" fill="#6a6a6a"/>
<path d="M1109 593 H1116 L1112.5 588.7 Z" fill="#6a6a6a"/><path d="M1109 652.5 H1116 L1112.5 656.8 Z" fill="#6a6a6a"/>
</svg>
<div class="abs" style="left:639px;top:581px;width:465px;height:5px;overflow:hidden"><div class="t fx n" style="left:239.500px;top:-13px;transform-origin:0 50%;transform:scaleX(0.94)">3 empty, 0 translated, 0 default</div><div class="t fx n" style="left:25px;top:-13px;transform-origin:0 50%;transform:scaleX(0.91)">Translated Display Folders</div></div>
<div id="status" class="abs"></div>
<div class="abs" style="left:0;top:699px;width:1125px;height:1px;background:#3a9bd0"></div>
<div class="abs" style="left:0;top:724px;width:1126px;height:1px;background:#5fa3c9"></div>
<div class="abs" style="left:0;top:725px;width:1126px;height:1px;background:#cfe9f6"></div>
<div class="abs" style="left:1125px;top:699px;width:1px;height:27px;background:#dfe6ec"></div>
<div class="abs" style="left:1125px;top:56px;width:1px;height:643px;background:#eae8f0"></div>
<svg style="left:0;top:0" width="1126" height="726" viewBox="0 0 1126 726">
<g transform="translate(16.5,679)"><path d="M1.6 1.1 H12.9 Q13.9 1.1 13.9 2.1 V9.4 Q13.9 10.4 12.9 10.4 H8 L5 13.4 V10.4 H2.6 Q1.6 10.4 1.6 9.4 V2.1 Q1.6 1.1 2.6 1.1 Z" fill="#f4f4f6" stroke="#2b2b2b" stroke-width="1.2"/><path d="M7.7 3 V6.5 M7.7 7.6 V8.9" stroke="#2b2b2b" stroke-width="1.5"/></g>
<g transform="translate(110,680)" fill="none" stroke="#2b2b2b"><circle cx="9.5" cy="4" r="2.3" stroke-width="1.3"/><circle cx="9.5" cy="4" r="3.8" stroke-width="1.4" stroke-dasharray="1.5 1.480"/><circle cx="4.5" cy="9.5" r="2" stroke-width="1.3"/><circle cx="4.5" cy="9.5" r="3.5" stroke-width="1.4" stroke-dasharray="1.4 1.350"/></g>
<g transform="translate(218.5,680)" fill="none" stroke="#2e8a57"><rect x="0.7" y="0.7" width="11.8" height="12.3" fill="#a9d1b8" stroke-width="1.3"/><path d="M0.7 2.3 H12.5" stroke-width="2.2"/><circle cx="6.8" cy="7.8" r="3.1" stroke-width="1.3" fill="#e4f2ea"/><path d="M9 10.2 L12.6 13.7" stroke-width="1.8"/></g>
<g transform="translate(353.5,682)"><rect x="-1" y="-0.5" width="12.6" height="11" rx="1" fill="#f4f4f6"/><g fill="#2b2b2b"><rect x="0" y="0.5" width="1.4" height="9"/><path d="M3 0.8 L8 5 L3 9.2 Z"/><rect x="9" y="0.5" width="1.6" height="9"/></g></g>
<g transform="translate(433.5,679)" fill="none" stroke="#2b2b2b" stroke-width="1.2"><rect x="1.5" y="0" width="11.8" height="14" fill="#f6f6f8" stroke="none"/><path d="M2.5 5 V0.8 H12.3 V13 H9"/><path d="M5 3.5 H10 M7 6 H10 M8.5 8.5 H10" stroke-width="1"/><path d="M3.2 6 H6 V8.5 L8.3 13.2 H0.8 L3.2 8.5 Z" fill="#f4f4f6"/><path d="M2 11.3 H7.2 L8.3 13.2 H0.8 Z" fill="#2b2b2b"/></g>
<g><text x="631" y="711.8" font-family="Liberation Sans, sans-serif" font-size="6.5" font-weight="bold" fill="#fff" textLength="9" lengthAdjust="spacingAndGlyphs">AB</text><path d="M644 711.3 L639.3 715.8" stroke="#fff" stroke-width="2.6" fill="none"/><path d="M638.6 714.6 L637.2 717.6 L640.3 716.4 Z" fill="#fff"/></g>
<g transform="translate(811.5,705)"><rect x="1" y="1" width="11.5" height="12" fill="none" stroke="#fff" stroke-width="1" stroke-dasharray="1.5 1"/><rect x="2.8" y="2.8" width="8" height="8.5" fill="#fff"/></g>
<g transform="translate(1011.5,706)" fill="#fff"><rect x="0" y="0" width="12.5" height="3.2"/><rect x="0" y="4.3" width="12.5" height="3.2"/><rect x="0" y="8.6" width="12.5" height="3.2"/><rect x="1.2" y="1.1" width="1.2" height="1" fill="#07699e"/><rect x="1.2" y="5.4" width="1.2" height="1" fill="#07699e"/><rect x="1.2" y="9.7" width="1.2" height="1" fill="#07699e"/></g>
</svg>
<!-- text -->
<div class="t ttl" style="left:29px;top:7px;transform:scaleX(0.9992);">C:\Users\DavidBojsen\source\repos\Tabular Editor\SQLBits Demo\SQLBits Demo\Demo2* - Tabular Editor 3.5.0 - Enterprise Edition</div>
<div class="t menu" style="left:26px;top:35px;transform:scaleX(0.8930);">File</div>
<div class="t menu" style="left:65px;top:35px;transform:scaleX(0.9282);">Edit</div>
<div class="t menu" style="left:106px;top:35px;transform:scaleX(0.9302);">View</div>
<div class="t menu" style="left:152px;top:35px;transform:scaleX(0.9055);">Expression</div>
<div class="t menu" style="left:229px;top:35px;transform:scaleX(0.9252);">Measure</div>
<div class="t menu" style="left:295px;top:35px;transform:scaleX(0.9986);">Model</div>
<div class="t menu" style="left:350px;top:35px;transform:scaleX(0.9593);">Tools</div>
<div class="t menu" style="left:399px;top:35px;transform:scaleX(0.9895);">Window</div>
<div class="t menu" style="left:464px;top:35px;transform:scaleX(0.9721);">Help</div>
<div class="t ptitle" style="left:11px;top:91.5px;transform:scaleX(0.8880);">Expression Editor</div>
<div class="t dax" style="left:14px;top:120px;transform:scaleX(0.8289);">DAX</div>
<div class="t n" style="left:37px;top:120px;transform:scaleX(0.9055);">Expression</div>
<div class="t n" style="left:210px;top:121px;transform:scaleX(0.9388);">on Measure [</div>
<div class="t n" style="left:279.5px;top:121px;transform:scaleX(0.8444);"><span class="lnk">Gross Sales</span></div>
<div class="t n" style="left:337.5px;top:121px;transform:scaleX(0.8610);">]</div>
<div class="t ptitle" style="left:646px;top:91.5px;transform:scaleX(0.9360);">TOM Explorer</div>
<div class="t g" style="left:876px;top:120px;transform:scaleX(0.9083);">Perspectives</div>
<div class="t g" style="left:990px;top:120px;transform:scaleX(0.9212);">Languages</div>
<div class="t g" style="left:644px;top:145px;transform:scaleX(0.9258);">Enter text to search...</div>
<div class="t n" style="left:645.5px;top:170px;transform:scaleX(0.9447);">Name</div>
<div class="t n" style="left:938.5px;top:170px;transform:scaleX(0.8434);">O...</div>
<div class="t n" style="left:971.5px;top:170px;transform:scaleX(0.9345);">Format</div>
<div class="t n" style="left:1043.5px;top:170px;transform:scaleX(0.9606);letter-spacing:-0.7px;">...</div>
<div class="t n" style="left:1065.5px;top:170px;transform:scaleX(0.9606);letter-spacing:-0.7px;">...</div>
<div class="t n" style="left:1088px;top:170px;transform:scaleX(0.9606);letter-spacing:-0.7px;">...</div>
<div class="t n" style="left:791px;top:193px;transform:scaleX(0.8905);">a. Gross Sales Actuals</div>
<div class="t n" style="left:937.7px;top:193px;transform:scaleX(0.8395);">Fo...</div>
<div class="t n" style="left:812px;top:211px;transform:scaleX(0.9560);">I. Total</div>
<div class="t n" style="left:937.7px;top:211px;transform:scaleX(0.8395);">Fo...</div>
<div class="t n" style="left:833.4px;top:229px;transform:scaleX(0.8459);">Gross Sales</div>
<div class="t n" style="left:937.7px;top:229px;transform:scaleX(0.9259);">M...</div>
<div class="t n" style="left:970px;top:229px;transform:scaleX(0.9590);">#,##0</div>
<div class="t n" style="left:1043.5px;top:229px;transform:scaleX(0.9606);letter-spacing:-0.7px;">...</div>
<div class="t dg" style="left:833.4px;top:247px;transform:scaleX(0.8475);">Gross Sales (Sele...</div>
<div class="t n" style="left:937.7px;top:247px;transform:scaleX(0.9259);">M...</div>
<div class="t n" style="left:970px;top:247px;transform:scaleX(0.9590);">#,##0</div>
<div class="t n" style="left:1043.5px;top:247px;transform:scaleX(0.9606);letter-spacing:-0.7px;">...</div>
<div class="t pu" style="left:833.4px;top:265px;transform:scaleX(0.8658);">MTD Gross Sales</div>
<div class="t n" style="left:937.7px;top:265px;transform:scaleX(0.9259);">M...</div>
<div class="t n" style="left:970px;top:265px;transform:scaleX(0.9590);">#,##0</div>
<div class="t n" style="left:1043.5px;top:265px;transform:scaleX(0.9606);letter-spacing:-0.7px;">...</div>
<div class="t dg" style="left:833.4px;top:283px;transform:scaleX(0.9512);">Total Net Invoic...</div>
<div class="t n" style="left:937.7px;top:283px;transform:scaleX(0.9259);">M...</div>
<div class="t n" style="left:970px;top:283px;transform:scaleX(0.9590);">#,##0</div>
<div class="t n" style="left:1043.5px;top:283px;transform:scaleX(0.9606);letter-spacing:-0.7px;">...</div>
<div class="t n" style="left:1065.5px;top:283px;transform:scaleX(0.9606);letter-spacing:-0.7px;">...</div>
<div class="t n" style="left:1088px;top:283px;transform:scaleX(0.9606);letter-spacing:-0.7px;">...</div>
<div class="t n" style="left:812px;top:301px;transform:scaleX(0.9992);">II. 1YP</div>
<div class="t n" style="left:937.7px;top:301px;transform:scaleX(0.8395);">Fo...</div>
<div class="t n" style="left:812px;top:319px;transform:scaleX(0.8537);">III. 2YP</div>
<div class="t n" style="left:937.7px;top:319px;transform:scaleX(0.8395);">Fo...</div>
<div class="t n" style="left:791px;top:337px;transform:scaleX(0.9406);">b. Cost &amp; Penalties</div>
<div class="t n" style="left:937.7px;top:337px;transform:scaleX(0.8395);">Fo...</div>
<div class="t n" style="left:791px;top:355px;transform:scaleX(0.8903);">c. Net Sales</div>
<div class="t n" style="left:937.7px;top:355px;transform:scaleX(0.8395);">Fo...</div>
<div class="t n" style="left:791px;top:373px;transform:scaleX(0.9596);">d. Margins</div>
<div class="t n" style="left:937.7px;top:373px;transform:scaleX(0.8395);">Fo...</div>
<div class="t n" style="left:770px;top:391px;transform:scaleX(0.9594);">2. Quantity</div>
<div class="t n" style="left:937.7px;top:391px;transform:scaleX(0.8395);">Fo...</div>
<div class="t n" style="left:770px;top:409px;transform:scaleX(0.8908);">3. Lines</div>
<div class="t n" style="left:937.7px;top:409px;transform:scaleX(0.8395);">Fo...</div>
<div class="t n" style="left:770px;top:427px;transform:scaleX(0.9731);">Columns</div>
<div class="t n" style="left:937.7px;top:427px;transform:scaleX(0.8395);">Fo...</div>
<div class="t n" style="left:749px;top:445px;transform:scaleX(0.9162);">Orders</div>
<div class="t n" style="left:937.7px;top:445px;transform:scaleX(0.8296);">Ta...</div>
<div class="t n" style="left:728px;top:463px;transform:scaleX(0.9207);">Parameter Tables</div>
<div class="t n" style="left:937.7px;top:463px;transform:scaleX(0.8395);">Fo...</div>
<div class="t n" style="left:707px;top:481px;transform:scaleX(0.9316);">Translations</div>
<div class="t n" style="left:937.7px;top:481px;transform:scaleX(0.8296);">Gr...</div>
<div class="t n" style="left:728px;top:499px;transform:scaleX(0.9312);">da-DK</div>
<div class="t n" style="left:937.7px;top:499px;transform:scaleX(0.8682);">Tr...</div>
<div class="t ptitle" style="left:646px;top:531px;transform:scaleX(0.9378);">Properties</div>
<div class="t g" style="left:753.5px;top:559px;transform:scaleX(0.9174);">Enter text to search...</div>
<div class="t n" style="left:664px;top:587.5px;transform:scaleX(0.9098);">Translated Names</div>
<div class="t n" style="left:878.5px;top:587.5px;transform:scaleX(0.9461);">3 empty, 0 translated, 0 default</div>
<div class="t n" style="left:684px;top:606.5px;transform:scaleX(0.9442);">Danish (Denmark) -- (da-DK)</div>
<div class="t n" style="left:684px;top:625.5px;transform:scaleX(0.9607);">Norwegian Nynorsk (Norway) -- (...</div>
<div class="t n" style="left:684px;top:644.5px;transform:scaleX(0.9091);">Swedish (Sweden) -- (sv-SE)</div>
<div class="t n" style="left:34.5px;top:679px;transform:scaleX(0.8862);">Messages</div>
<div class="t n" style="left:127.5px;top:679px;transform:scaleX(0.8825);">Data Refresh</div>
<div class="t n" style="left:235px;top:679px;transform:scaleX(0.9375);">VertiPaq Analyzer</div>
<div class="t n" style="left:369px;top:679px;transform:scaleX(0.9516);">Macros</div>
<div class="t n" style="left:450px;top:679px;transform:scaleX(0.9195);">Best Practice Analyzer</div>
<div class="t st" style="left:7px;top:704px;transform:scaleX(0.9678);">Model loaded.</div>
<div class="t st b" style="left:510px;top:704px;transform:scaleX(0.8824);">826 BP issues</div>
<div class="t st" style="left:650.5px;top:704px;transform:scaleX(0.8832);">Ln 1</div>
<div class="t st" style="left:684.5px;top:704px;transform:scaleX(0.9079);">Col 1</div>
<div class="t st" style="left:735.5px;top:704px;transform:scaleX(0.8396);">INS</div>
<div class="t st" style="left:830.5px;top:704px;transform:scaleX(0.8910);">Measure "Gross Sales"</div>
<div class="t st" style="left:1030.5px;top:704px;transform:scaleX(0.9802);">(No connection)</div>
<svg style="left:0;top:0" width="1126" height="726" viewBox="0 0 1126 726"><path d="M695.5 572.5 V588.5 L699.3 585 L702 591 L704.5 589.8 L701.8 584 H706.8 Z" fill="#fff" stroke="#111" stroke-width="1"/></svg>
</body>
</html>
